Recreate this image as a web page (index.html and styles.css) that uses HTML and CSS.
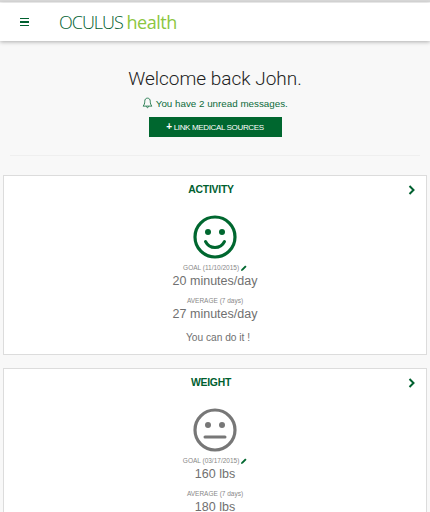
FILE: index.html
```html
<!DOCTYPE html>
<html lang="en">
<head>
    <meta charset="UTF-8">
    <meta name="viewport" content="width=device-width, initial-scale=1.0">
    <title>Oculus Health</title>
    <link rel="stylesheet" href="styles.css">
</head>
<body>
    <nav class="navbar">
        <span class="burger"><i></i><i></i><i></i></span>
        <span class="logo">OCULUS <b>health</b></span>
    </nav>

    <header class="welcome">
        <h1>Welcome back John.</h1>
        <p class="messages">
            <svg class="bell" viewBox="0 0 12 13" width="11" height="12">
                <path d="M6 1.2C3.9 1.2 3 2.8 3 4.6c0 2.6-.6 4-1.9 5.3h9.8C9.600 8.600 9 7.200 9 4.600 9 2.800 8.100 1.200 6 1.200zM4.800 10.200c.2.900.7 1.400 1.200 1.400s1-.5 1.200-1.400" fill="none" stroke="#0b6b3a" stroke-width="0.9"/>
            </svg>
            You have 2 unread messages.
        </p>
        <a class="btn-link"><span class="plus">+</span> LINK MEDICAL SOURCES</a>
    </header>

    <section class="card">
        <div class="card-head">
            <h2>ACTIVITY</h2>
            <svg class="chevron" viewBox="0 0 8 10" width="8" height="10"><path d="M1.500 1l4 4-4 4" fill="none" stroke="#00602f" stroke-width="2"/></svg>
        </div>
        <svg class="face" viewBox="0 0 44 44" width="44" height="44">
            <circle cx="22" cy="22" r="20" fill="none" stroke="#00672f" stroke-width="3.200"/>
            <circle cx="15" cy="17" r="3" fill="#00672f"/>
            <circle cx="29" cy="17" r="3" fill="#00672f"/>
            <path d="M12.500 26.500c2 4 5.500 6 9.500 6s7.500-2 9.500-6" fill="none" stroke="#00672f" stroke-width="3" stroke-linecap="round"/>
        </svg>
        <div class="label">GOAL (11/10/2015)
            <svg class="pencil" viewBox="0 0 6 6" width="6" height="6"><path d="M0 6l.4-1.800L4.200.4l1.400 1.400L1.800 5.600z" fill="#00672f"/></svg>
        </div>
        <div class="value">20 minutes/day</div>
        <div class="label avg">AVERAGE (7 days)</div>
        <div class="value">27 minutes/day</div>
        <p class="note">You can do it !</p>
    </section>

    <section class="card">
        <div class="card-head">
            <h2>WEIGHT</h2>
            <svg class="chevron" viewBox="0 0 8 10" width="8" height="10"><path d="M1.500 1l4 4-4 4" fill="none" stroke="#00602f" stroke-width="2"/></svg>
        </div>
        <svg class="face" viewBox="0 0 44 44" width="44" height="44">
            <circle cx="22" cy="22" r="20" fill="none" stroke="#777" stroke-width="3.200"/>
            <circle cx="15" cy="17" r="3" fill="#777"/>
            <circle cx="29" cy="17" r="3" fill="#777"/>
            <path d="M12 29h20" fill="none" stroke="#777" stroke-width="3" stroke-linecap="round"/>
        </svg>
        <div class="label">GOAL (03/17/2015)
            <svg class="pencil" viewBox="0 0 6 6" width="6" height="6"><path d="M0 6l.4-1.800L4.200.4l1.400 1.400L1.800 5.600z" fill="#00672f"/></svg>
        </div>
        <div class="value">160 lbs</div>
        <div class="label avg">AVERAGE (7 days)</div>
        <div class="value">180 lbs</div>
    </section>
</body>
</html>
```

FILE: styles.css
```css
html, body {
    height: 100%;
    overflow: hidden;
}
body {
    font-family: "Liberation Sans", Arial, sans-serif;
    background-color: #f8f8f8;
    color: #555;
    margin: 0;
    padding-top: 3px;
    box-sizing: border-box;
}
body::before {
    content: '';
    display: block;
    height: 2px;
    margin-top: -3px;
    margin-bottom: 1px;
    background-color: #d9d9d9;
}
.navbar {
    display: flex;
    align-items: center;
    height: 38px;
    padding-left: 20px;
    background-color: #fff;
    box-shadow: 0 1px 4px rgba(0, 0, 0, 0.3);
}
.burger {
    display: flex;
    flex-direction: column;
    gap: 2px;
    width: 9px;
    margin-right: 30px;
}
.burger i {
    display: block;
    height: 1.500px;
    background-color: #00602f;
}
.logo {
    font-family: "Open Sans", sans-serif;
    font-weight: 300;
    font-size: 18px;
    letter-spacing: -1px;
    color: #00602f;
    white-space: nowrap;
}
.logo b {
    font-weight: 400;
    color: #8cc63f;
    letter-spacing: -0.500px;
}
.welcome {
    margin: 0 10px 19px;
    padding: 27px 0 18px;
    text-align: center;
    border-bottom: 1px solid #efefef;
}
.welcome h1 {
    margin: 0;
    font-family: Roboto, "Liberation Sans", sans-serif;
    font-size: 19px;
    line-height: 22px;
    font-weight: 300;
    color: #222;
}
.messages {
    margin: 7px 0 0;
    font-size: 9.800px;
    line-height: 14px;
    color: #0b6b3a;
}
.bell {
    vertical-align: -2px;
}
.btn-link {
    display: block;
    width: 133px;
    height: 20px;
    margin: 6px auto 0;
    line-height: 20px;
    font-size: 8px;
    letter-spacing: -0.350px;
    color: #fff;
    background-color: #00672f;
}
.plus {
    font-weight: 700;
    font-size: 10px;
}
.card {
    margin: 0 3px 13px;
    min-height: 178px;
    background-color: #fff;
    border: 1px solid #dcdcdc;
    text-align: center;
}
.card-head {
    position: relative;
    padding: 8px 8px 0 0;
    height: 30px;
}
.card-head h2 {
    margin: 0;
    font-size: 10.400px;
    line-height: 12px;
    letter-spacing: -0.250px;
    font-weight: 700;
    color: #00602f;
}
.chevron {
    position: absolute;
    top: 9px;
    right: 10px;
}
.face {
    display: block;
    margin: 1px auto 0;
}
.label {
    margin-top: 5px;
    font-size: 6.500px;
    line-height: 8px;
    color: #888;
}
.avg {
    margin-top: 8px;
}
.value {
    margin-top: 1px;
    font-size: 12.500px;
    line-height: 16px;
    color: #707070;
}
.note {
    margin: 9px 0 0;
    font-size: 10.200px;
    line-height: 14px;
    color: #707070;
    padding-left: 6px;
}
.pencil {
    vertical-align: -1px;
}
```
